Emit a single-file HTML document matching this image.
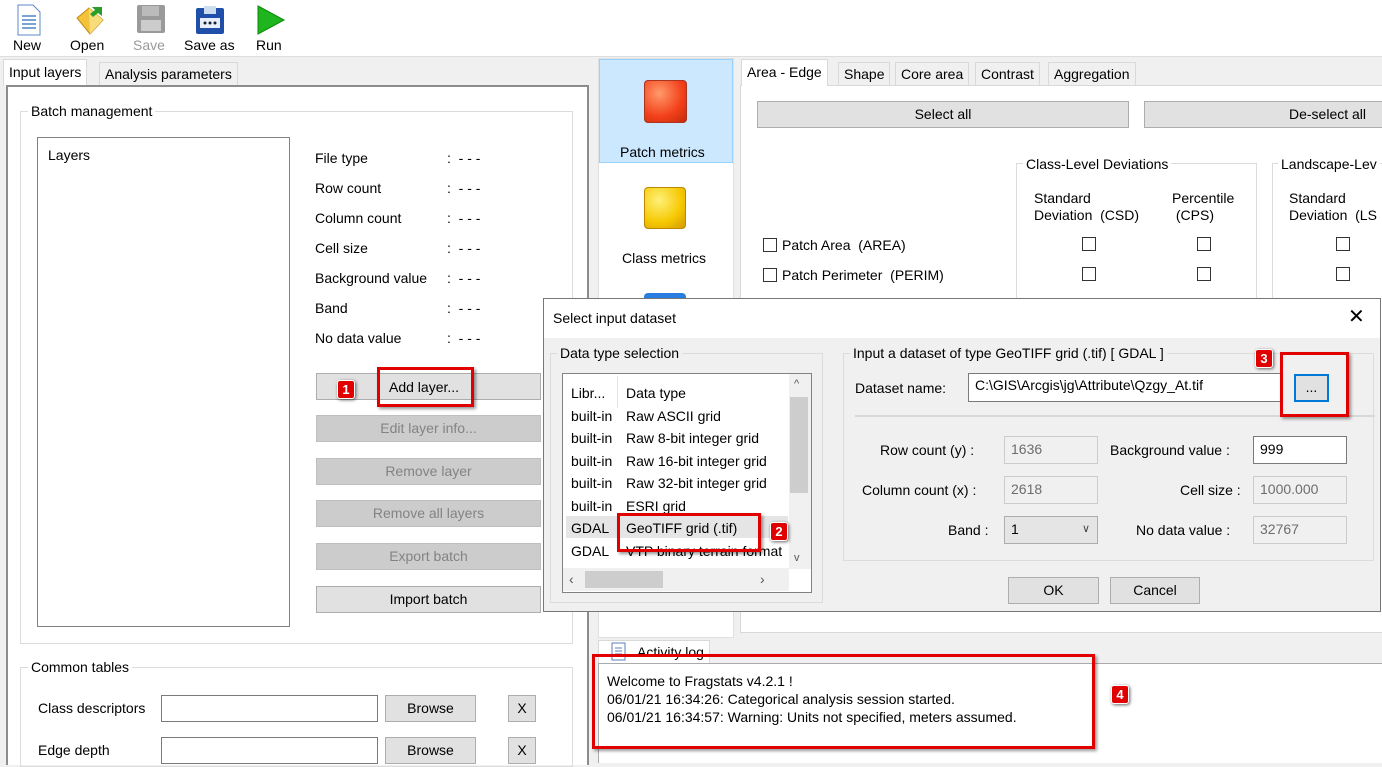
<!DOCTYPE html>
<html><head><meta charset="utf-8"><style>
*{box-sizing:border-box;margin:0;padding:0}
body{width:1382px;height:757px;overflow:hidden;background:#f0f0f0;font-family:"Liberation Sans",sans-serif;font-size:14px;color:#000;position:relative}
.a{position:absolute}
.t{position:absolute;white-space:nowrap;line-height:16px}
.btn{position:absolute;background:#e1e1e1;border:1px solid #adadad;text-align:center;line-height:24px;white-space:nowrap}
.dis{background:#cccccc;border-color:#bfbfbf;color:#838383}
.grp{position:absolute;border:1px solid #dcdcdc}
.gl{position:absolute;background:#f0f0f0;padding:0 3px;line-height:16px;white-space:nowrap}
.w{background:#fff}
.inp{position:absolute;background:#fff;border:1px solid #7a7a7a;line-height:24px;padding-left:6px;white-space:nowrap}
.ro{background:#f0f0f0;border-color:#ccc;color:#6d6d6d}
.cb{position:absolute;width:14px;height:14px;border:1px solid #333;background:#fff}
.red{position:absolute;border:3px solid #e00000;box-shadow:2px 2px 3px rgba(0,0,0,.4)}
.bd{position:absolute;background:#e00000;color:#fff;font-weight:bold;font-size:13px;text-align:center;line-height:18px;width:18px;height:19px;border:1px solid #fff;border-radius:3px;box-shadow:1px 1px 3px rgba(0,0,0,.6)}
.tab{position:absolute;border:1px solid #d9d9d9;border-bottom:none;background:#f0f0f0;line-height:22px;padding:0 5px;white-space:nowrap}
</style></head><body>
<!-- toolbar -->
<div class="a" style="left:0;top:0;width:1382px;height:57px;background:#fff;border-bottom:1px solid #ddd"></div>
<svg class="a" style="left:14px;top:4px" width="30" height="32"><path d="M4 1h15l7 7v23H4z" fill="#fff" stroke="#5b8ac4"/><path d="M8 12h14M8 16h14M8 20h14M8 24h14" stroke="#7aa3d6" stroke-width="2"/></svg>
<svg class="a" style="left:74px;top:4px" width="32" height="32"><path d="M3 14l12-10 14 12-13 14z" fill="#f3c33a" stroke="#c08a10"/><path d="M15 4l14 12-13 14z" fill="#f8dc7a"/><path d="M18 3h10v9l-4-3-5 4-3-3 5-4z" fill="#2a9d2a"/></svg>
<svg class="a" style="left:136px;top:4px" width="30" height="30"><rect x="1" y="1" width="28" height="28" rx="2" fill="#9a9a9a"/><rect x="6" y="2" width="17" height="10" fill="#bbb"/><rect x="5" y="16" width="20" height="11" fill="#ccc"/></svg>
<svg class="a" style="left:194px;top:4px" width="32" height="32"><rect x="2" y="4" width="28" height="26" rx="2" fill="#1f4fa8"/><rect x="10" y="2" width="12" height="8" fill="#cde"/><rect x="6" y="14" width="20" height="10" fill="#e8eefa"/><circle cx="11" cy="19" r="1.5" fill="#123"/><circle cx="16" cy="19" r="1.5" fill="#123"/><circle cx="21" cy="19" r="1.5" fill="#123"/></svg>
<svg class="a" style="left:255px;top:4px" width="32" height="32"><path d="M3 2l26 14-26 14z" fill="#1fb51f" stroke="#0a8a0a"/></svg>
<div class="t" style="left:13px;top:37px">New</div>
<div class="t" style="left:70px;top:37px">Open</div>
<div class="t" style="left:133px;top:37px;color:#999">Save</div>
<div class="t" style="left:184px;top:37px">Save as</div>
<div class="t" style="left:256px;top:37px">Run</div>
<!-- left tabs -->
<div class="tab" style="left:99px;top:62px;height:23px">Analysis parameters</div>
<div class="tab" style="left:3px;top:59px;height:27px;background:#fff;line-height:24px">Input layers</div>
<div class="a" style="left:6px;top:85px;width:583px;height:680px;background:#fff;border:2px solid #8c8c8c;border-bottom:none"></div>
<div class="grp" style="left:20px;top:111px;width:553px;height:533px"></div>
<div class="gl w" style="left:28px;top:103px">Batch management</div>
<div class="a" style="left:37px;top:137px;width:253px;height:490px;background:#fff;border:1px solid #828282"></div>
<div class="t" style="left:48px;top:147px">Layers</div>
<div class="t" style="left:315px;top:143px;line-height:30px">File type<br>Row count<br>Column count<br>Cell size<br>Background value<br>Band<br>No data value</div>
<div class="t" style="left:447px;top:143px;line-height:30px">:&nbsp;&nbsp;- - -<br>:&nbsp;&nbsp;- - -<br>:&nbsp;&nbsp;- - -<br>:&nbsp;&nbsp;- - -<br>:&nbsp;&nbsp;- - -<br>:&nbsp;&nbsp;- - -<br>:&nbsp;&nbsp;- - -</div>
<div class="btn" style="left:316px;top:373px;width:225px;height:27px">&nbsp;</div>
<div class="t" style="left:389px;top:379px">Add layer...</div>
<div class="btn dis" style="left:316px;top:415px;width:225px;height:27px">Edit layer info...</div>
<div class="btn dis" style="left:316px;top:458px;width:225px;height:27px">Remove layer</div>
<div class="btn dis" style="left:316px;top:500px;width:225px;height:27px">Remove all layers</div>
<div class="btn dis" style="left:316px;top:543px;width:225px;height:27px">Export batch</div>
<div class="btn" style="left:316px;top:586px;width:225px;height:27px">Import batch</div>
<div class="grp" style="left:20px;top:667px;width:553px;height:100px"></div>
<div class="gl w" style="left:28px;top:659px">Common tables</div>
<div class="t" style="left:38px;top:700px">Class descriptors</div>
<div class="inp" style="left:161px;top:695px;width:217px;height:27px"></div>
<div class="btn" style="left:385px;top:695px;width:91px;height:27px">Browse</div>
<div class="btn" style="left:508px;top:695px;width:28px;height:27px">X</div>
<div class="t" style="left:38px;top:742px">Edge depth</div>
<div class="inp" style="left:161px;top:737px;width:217px;height:27px"></div>
<div class="btn" style="left:385px;top:737px;width:91px;height:27px">Browse</div>
<div class="btn" style="left:508px;top:737px;width:28px;height:27px">X</div>
<!-- middle sidebar -->
<div class="a" style="left:598px;top:58px;width:136px;height:580px;background:#fff;border:1px solid #e0e0e0"></div>
<div class="a" style="left:599px;top:59px;width:134px;height:104px;background:#cce8ff;border:1px solid #99d1ff"></div>
<div class="a" style="left:644px;top:80px;width:43px;height:43px;border-radius:4px;background:radial-gradient(circle at 35% 30%,#ff9a6a,#f2401a 60%,#c42a0a);border:1px solid #a32"></div>
<div class="t" style="left:620px;top:144px">Patch metrics</div>
<div class="a" style="left:644px;top:187px;width:42px;height:42px;border-radius:4px;background:radial-gradient(circle at 35% 30%,#fff07a,#f5c800 60%,#d49a00);border:1px solid #b80"></div>
<div class="t" style="left:622px;top:250px">Class metrics</div>
<div class="a" style="left:644px;top:293px;width:42px;height:10px;border-radius:4px 4px 0 0;background:#2a7de0"></div>
<!-- right tabs -->
<div class="tab" style="left:838px;top:62px;height:23px">Shape</div>
<div class="tab" style="left:895px;top:62px;height:23px">Core area</div>
<div class="tab" style="left:975px;top:62px;height:23px">Contrast</div>
<div class="tab" style="left:1048px;top:62px;height:23px">Aggregation</div>
<div class="a" style="left:740px;top:85px;width:650px;height:548px;background:#fff;border:1px solid #d9d9d9"></div>
<div class="tab" style="left:741px;top:59px;height:27px;background:#fff;line-height:24px">Area - Edge</div>
<div class="btn" style="left:757px;top:101px;width:372px;height:27px">Select all</div>
<div class="btn" style="left:1144px;top:101px;width:250px;height:27px;text-align:left;padding-left:144px">De-select all</div>
<div class="a" style="left:1016px;top:163px;width:241px;height:140px;border:1px solid #dcdcdc;border-bottom:none"></div>
<div class="t" style="left:1023px;top:156px;background:#fff;padding:0 3px">Class-Level Deviations</div>
<div class="a" style="left:1272px;top:163px;width:120px;height:140px;border:1px solid #dcdcdc;border-bottom:none"></div>
<div class="t" style="left:1278px;top:156px;background:#fff;padding:0 3px">Landscape-Lev</div>
<div class="t" style="left:1034px;top:190px;line-height:17px">Standard<br>Deviation&nbsp; (CSD)</div>
<div class="t" style="left:1172px;top:190px;line-height:17px">Percentile<br>&nbsp;(CPS)</div>
<div class="t" style="left:1289px;top:190px;line-height:17px">Standard<br>Deviation&nbsp; (LS</div>
<div class="cb" style="left:763px;top:238px"></div><div class="t" style="left:782px;top:237px">Patch Area&nbsp; (AREA)</div>
<div class="cb" style="left:763px;top:268px"></div><div class="t" style="left:782px;top:267px">Patch Perimeter&nbsp; (PERIM)</div>
<div class="cb" style="left:1082px;top:237px"></div><div class="cb" style="left:1197px;top:237px"></div><div class="cb" style="left:1336px;top:237px"></div>
<div class="cb" style="left:1082px;top:267px"></div><div class="cb" style="left:1197px;top:267px"></div><div class="cb" style="left:1336px;top:267px"></div>
<!-- activity log -->
<div class="tab" style="left:598px;top:640px;height:24px;background:#fff;padding-left:38px">Activity log</div>
<svg class="a" style="left:611px;top:642px" width="16" height="20"><rect x="1" y="1" width="13" height="17" fill="#fff" stroke="#5b7fb5"/><path d="M4 6h7M4 9h7M4 12h7" stroke="#5b7fb5"/></svg>
<div class="a" style="left:598px;top:663px;width:790px;height:100px;background:#fff;border-top:1px solid #aaa;border-left:1px solid #aaa"></div>
<div class="t" style="left:607px;top:672px;line-height:18px">Welcome to Fragstats v4.2.1 !<br>06/01/21 16:34:26: Categorical analysis session started.<br>06/01/21 16:34:57: Warning: Units not specified, meters assumed.</div>
<!-- dialog -->
<div class="a" style="left:543px;top:298px;width:838px;height:314px;background:#f0f0f0;border:1px solid #777"></div>
<div class="a" style="left:544px;top:299px;width:836px;height:39px;background:#fff"></div>
<div class="t" style="left:553px;top:310px">Select input dataset</div>
<div class="t" style="left:1348px;top:306px;font-size:20px;line-height:22px">✕</div>
<div class="grp" style="left:550px;top:353px;width:273px;height:250px"></div>
<div class="gl" style="left:557px;top:345px">Data type selection</div>
<div class="a" style="left:562px;top:373px;width:250px;height:220px;background:#fff;border:1px solid #828282"></div>
<div class="a" style="left:617px;top:376px;width:1px;height:32px;background:#e5e5e5"></div>
<div class="a" style="left:566px;top:516px;width:222px;height:22px;background:#e5e5e5"></div>
<div class="t" style="left:571px;top:382px;line-height:22.5px">Libr...<br>built-in<br>built-in<br>built-in<br>built-in<br>built-in<br>GDAL<br>GDAL</div>
<div class="t" style="left:626px;top:382px;line-height:22.5px;height:182px;overflow:hidden;width:162px">Data type<br>Raw ASCII grid<br>Raw 8-bit integer grid<br>Raw 16-bit integer grid<br>Raw 32-bit integer grid<br>ESRI grid<br>GeoTIFF grid (.tif)<br>VTP binary terrain format</div>
<div class="a" style="left:789px;top:374px;width:22px;height:195px;background:#f0f0f0"></div>
<div class="a" style="left:790px;top:397px;width:18px;height:96px;background:#cdcdcd"></div>
<div class="t" style="left:794px;top:376px;font-size:11px;color:#555">^</div>
<div class="t" style="left:794px;top:550px;font-size:11px;color:#555">v</div>
<div class="a" style="left:563px;top:568px;width:226px;height:23px;background:#f0f0f0"></div>
<div class="a" style="left:585px;top:571px;width:78px;height:17px;background:#cdcdcd"></div>
<div class="t" style="left:569px;top:571px;color:#555">‹</div><div class="t" style="left:760px;top:571px;color:#555">›</div>
<div class="grp" style="left:843px;top:353px;width:531px;height:208px"></div>
<div class="gl" style="left:850px;top:345px">Input a dataset of type GeoTIFF grid (.tif) [ GDAL ]</div>
<div class="t" style="left:855px;top:380px">Dataset name:</div>
<div class="inp" style="left:968px;top:373px;width:313px;height:29px;line-height:22px">C:\GIS\Arcgis\jg\Attribute\Qzgy_At.tif</div>
<div class="btn" style="left:1294px;top:374px;width:35px;height:28px;border:2px solid #0078d7;line-height:22px">...</div>
<div class="a" style="left:855px;top:415px;width:520px;height:2px;background:#d8d8d8"></div>
<div class="t" style="left:880px;top:442px">Row count (y) :</div>
<div class="inp ro" style="left:1004px;top:436px;width:94px;height:28px">1636</div>
<div class="t" style="left:1110px;top:442px">Background value :</div>
<div class="inp" style="left:1253px;top:436px;width:94px;height:28px">999</div>
<div class="t" style="left:862px;top:482px">Column count (x) :</div>
<div class="inp ro" style="left:1004px;top:476px;width:94px;height:28px">2618</div>
<div class="t" style="left:1180px;top:482px">Cell size :</div>
<div class="inp ro" style="left:1253px;top:476px;width:94px;height:28px">1000.000</div>
<div class="t" style="left:948px;top:522px">Band :</div>
<div class="inp" style="left:1004px;top:516px;width:94px;height:28px;background:#e5e5e5;border-color:#adadad">1<span style="position:absolute;right:7px;font-size:11px;color:#444">∨</span></div>
<div class="t" style="left:1136px;top:522px">No data value :</div>
<div class="inp ro" style="left:1253px;top:516px;width:94px;height:28px">32767</div>
<div class="btn" style="left:1008px;top:577px;width:91px;height:27px">OK</div>
<div class="btn" style="left:1110px;top:577px;width:90px;height:27px">Cancel</div>
<!-- annotations -->
<div class="red" style="left:377px;top:367px;width:97px;height:40px"></div>
<div class="bd" style="left:337px;top:380px">1</div>
<div class="red" style="left:617px;top:513px;width:144px;height:39px"></div>
<div class="bd" style="left:770px;top:522px">2</div>
<div class="red" style="left:1280px;top:352px;width:69px;height:65px"></div>
<div class="bd" style="left:1255px;top:349px">3</div>
<div class="red" style="left:592px;top:654px;width:503px;height:95px"></div>
<div class="bd" style="left:1111px;top:685px">4</div>
</body></html>
